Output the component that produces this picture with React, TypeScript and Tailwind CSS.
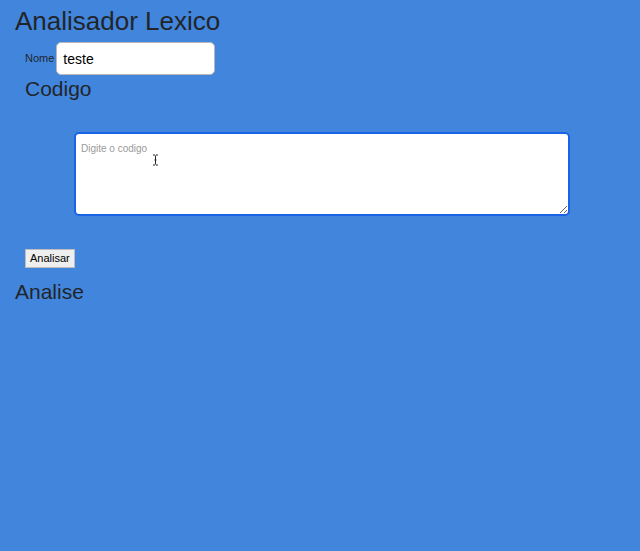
export default function App() {
  return (
    <div className="min-h-[551px] w-full bg-[#4285dd] text-[#212529] font-['Liberation_Sans',sans-serif]">
      <h1 className="pl-[15px] pt-[4px] text-[26px] leading-[34px]">Analisador Lexico</h1>
      <div className="flex items-center gap-[2px] pl-[25px] pt-[4px]">
        <label className="text-[11px]">Nome</label>
        <input
          defaultValue="teste"
          className="h-[33px] w-[159px] rounded-[5px] border border-[#b8b8b8] bg-white px-[6px] text-[14px] text-black outline-none"
        />
      </div>
      <h2 className="pl-[25px] text-[21px] leading-[28px]">Codigo</h2>
      <div className="relative pl-[74px] pt-[29px]">
        <textarea
          placeholder="Digite o codigo"
          className="block h-[84px] w-[496px] rounded-[5px] border-2 border-[#1a62e6] bg-white px-[5px] py-[7px] text-[10px] text-black outline-none placeholder:text-[#9a9a9a]"
        />
        <svg className="absolute left-[152px] top-[51px]" width="7" height="12" viewBox="0 0 7 12">
          <path d="M1 1h2M4 1h2M3.5 1.5v9M1 11h2M4 11h2M2.5 6h2" stroke="#222" strokeWidth="1" fill="none" />
        </svg>
      </div>
      <div className="pl-[25px] pt-[29px]">
        <button className="h-[19px] border border-[#bdbdbd] bg-[#efefef] px-[4px] text-[11px] leading-[17px] text-black">
          Analisar
        </button>
      </div>
      <h2 className="pl-[15px] pt-[9px] text-[21px] leading-[28px]">Analise</h2>
    </div>
  )
}
